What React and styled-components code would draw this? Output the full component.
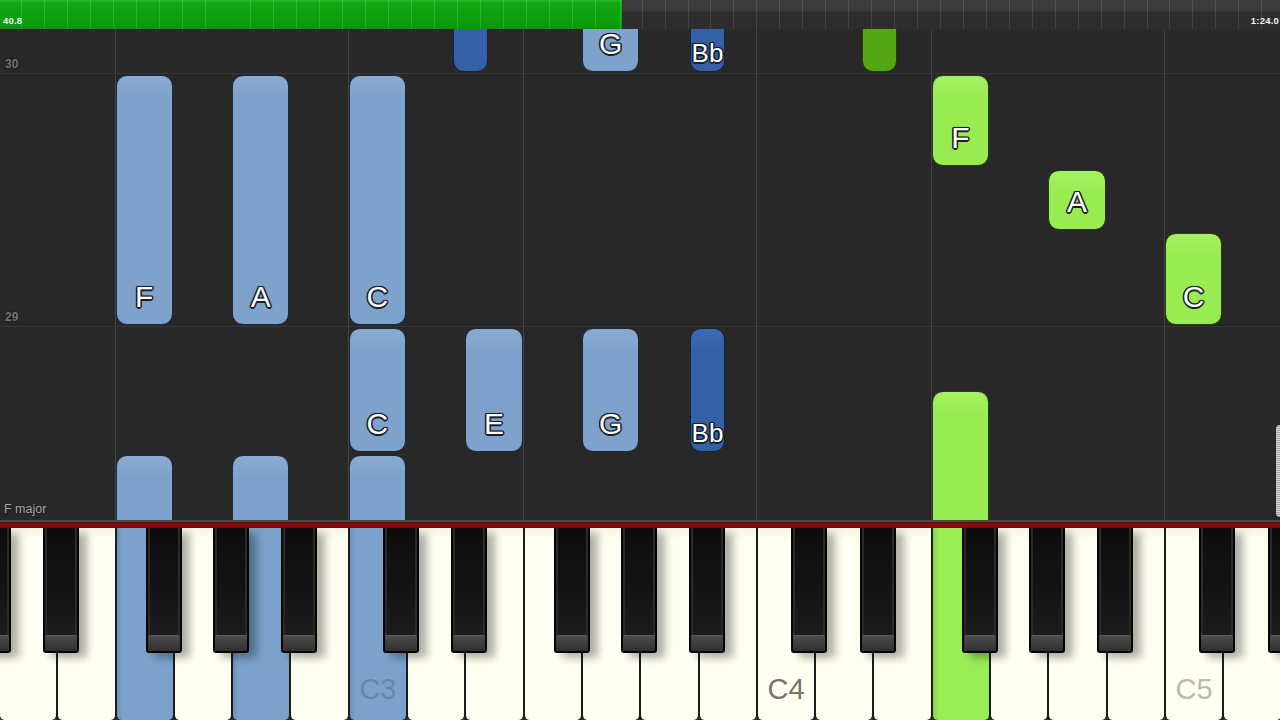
import React from "react";
import styled, { createGlobalStyle } from "styled-components";

const W = 58.3;
const X0 = -1;
const NAMES = ["D", "E", "F", "G", "A", "B", "C"];
const BLACK_OFFSET = { C: -24, D: -14, F: -28, G: -19, A: -10 };

const keyX = (i) => X0 + i * W;

const WHITE_KEYS = Array.from({ length: 22 }, (_, i) => ({
  name: NAMES[i % 7],
  octave: 2 + Math.floor((i + 1) / 7),
}));

const BLACK_KEYS = [
  { left: X0 + BLACK_OFFSET.C },
  ...WHITE_KEYS.map((k, i) =>
    BLACK_OFFSET[k.name] !== undefined
      ? { left: keyX(i + 1) + BLACK_OFFSET[k.name] }
      : null
  ).filter(Boolean),
];

const LIT = { 2: "blue", 4: "blue", 6: "blue", 16: "green" };
const KEY_LABELS = {
  6: { text: "C3", color: "#6a87aa" },
  13: { text: "C4", color: "#76766e" },
  20: { text: "C5", color: "#b9b9b1" },
};

const GRID_X = [1, 5, 8, 12, 15, 19].map((i) => keyX(i + 1));
const GRID_Y = [
  { y: 44, label: "30" },
  { y: 297, label: "29" },
];

// white-key notes: key index, top, height (relative to roll), label
const NOTES = [
  { key: 2, top: 46, h: 250, label: "F", tone: "blue" },
  { key: 2, top: 426, h: 120, tone: "blue" },
  { key: 4, top: 46, h: 250, label: "A", tone: "blue" },
  { key: 4, top: 426, h: 120, tone: "blue" },
  { key: 6, top: 46, h: 250, label: "C", tone: "blue" },
  { key: 6, top: 299, h: 124, label: "C", tone: "blue" },
  { key: 6, top: 426, h: 120, tone: "blue" },
  { key: 8, top: 299, h: 124, label: "E", tone: "blue" },
  { key: 10, top: 299, h: 124, label: "G", tone: "blue" },
  { key: 10, top: -20, h: 63, label: "G", tone: "blue" },
  { key: 16, top: 46, h: 91, label: "F", tone: "green" },
  { key: 16, top: 362, h: 180, tone: "green" },
  { key: 18, top: 141, h: 60, label: "A", tone: "green" },
  { key: 20, top: 204, h: 92, label: "C", tone: "green" },
];

const SHARP_NOTES = [
  { left: 690, top: 299, h: 124, label: "Bb", tone: "blue" },
  { left: 690, top: -20, h: 63, label: "Bb", tone: "blue" },
  { left: 453, top: -20, h: 63, tone: "blue" },
  { left: 862, top: -20, h: 63, tone: "green" },
];

const TONES = {
  blue: { fill: "#7fa2cc", top: "#8aabd3", edge: "#1d2a3c" },
  green: { fill: "#98ec52", top: "#a4f262", edge: "#2a3a1a" },
};
const SHARP_TONES = {
  blue: { fill: "#3461a6", top: "#3d6bb2", edge: "#142544" },
  green: { fill: "#55a614", top: "#66bb1c", edge: "#22400a" },
};

const GlobalStyle = createGlobalStyle`
  html, body {
    margin: 0;
    padding: 0;
    background: #282828;
    overflow: hidden;
  }
  body {
    font-family: "Liberation Sans", Arial, sans-serif;
  }
`;

const Screen = styled.div`
  width: 1280px;
  height: 720px;
  display: flex;
  flex-direction: column;
  overflow: hidden;
  background: #282828;
`;

const TopBar = styled.div`
  height: 29px;
  display: flex;
  flex: 0 0 auto;
`;

const Played = styled.div`
  width: 622px;
  display: flex;
  align-items: flex-end;
  padding: 0 0 3px 3px;
  box-sizing: border-box;
  background-image: repeating-linear-gradient(
      to right,
      transparent 0,
      transparent 21px,
      rgba(255, 255, 255, 0.14) 21px,
      rgba(255, 255, 255, 0.14) 22px,
      transparent 22px,
      transparent 22.95px
    ),
    linear-gradient(#2cb82c 0, #12a612 3px, #0c9e0c 22px, #0a930a 29px);
  background-position: -23px 0, 0 0;
`;

const Remaining = styled.div`
  flex: 1;
  display: flex;
  align-items: flex-end;
  justify-content: flex-end;
  padding: 0 1px 3px 0;
  box-sizing: border-box;
  overflow: hidden;
  background-image: repeating-linear-gradient(
      to right,
      transparent 0,
      transparent 19.6px,
      rgba(255, 255, 255, 0.1) 19.6px,
      rgba(255, 255, 255, 0.1) 20.6px,
      transparent 20.6px,
      transparent 22.95px
    ),
    linear-gradient(#3d3d3d 0, #3a3a3a 11px, #2f2f2f 12px, #2c2c2c 29px);
`;

const TimeText = styled.span`
  font-size: 9.5px;
  font-weight: bold;
  color: #f4f4f4;
  letter-spacing: 0.2px;
  white-space: nowrap;
`;

const Roll = styled.div`
  position: relative;
  height: 491px;
  flex: 0 0 auto;
  overflow: hidden;
  background: #282828;
`;

const VLine = styled.div`
  position: absolute;
  top: 0;
  bottom: 0;
  width: 1px;
  background: #424242;
`;

const HLine = styled.div`
  position: absolute;
  left: 0;
  right: 0;
  height: 1px;
  background: #373737;
`;

const MeasureLabel = styled.span`
  position: absolute;
  left: 5px;
  font-size: 12px;
  font-weight: bold;
  color: #727272;
  text-shadow: 0 0 2px #111;
`;

const KeyName = styled.span`
  position: absolute;
  left: 4px;
  bottom: 4px;
  font-size: 12.5px;
  color: #a8a8a8;
  text-shadow: 0 0 2px #111;
`;

const outline = (c) => `
  1.5px 0 0 ${c}, -1.5px 0 0 ${c}, 0 1.5px 0 ${c}, 0 -1.5px 0 ${c},
  1px 1px 0 ${c}, -1px -1px 0 ${c}, 1px -1px 0 ${c}, -1px 1px 0 ${c},
  0 0 2px ${c}
`;

const Note = styled.div`
  position: absolute;
  box-sizing: border-box;
  display: flex;
  flex-direction: column;
  justify-content: flex-end;
  align-items: center;
  border-radius: 11px;
  border: 1.5px solid ${(p) => p.$tone.edge};
  background: linear-gradient(${(p) => p.$tone.top}, ${(p) => p.$tone.fill} 22px);
  padding-bottom: ${(p) => (p.$sharp ? "5px" : "12px")};
`;

const NoteLabel = styled.span`
  font-size: ${(p) => (p.$sharp ? "26px" : "30px")};
  line-height: 1;
  color: #ffffff;
  text-shadow: ${outline("#1a1e26")};
`;

const ScrollNub = styled.div`
  position: absolute;
  right: 0;
  top: 396px;
  width: 4px;
  height: 92px;
  border-radius: 4px 0 0 4px;
  background: repeating-linear-gradient(#d8d8d8 0, #d8d8d8 1px, #a0a0a0 1px, #a0a0a0 2px);
`;

const KeyboardRim = styled.div`
  flex: 0 0 auto;
  height: 8px;
  background: linear-gradient(#4a4a4a 0, #4a4a4a 2px, #6a0808 2px, #8e0d0d 5px, #7a0a0a 8px);
`;

const Keyboard = styled.div`
  position: relative;
  height: 192px;
  display: flex;
  margin-left: ${X0}px;
  flex: 0 0 auto;
`;

const WhiteKey = styled.div`
  flex: 0 0 ${W}px;
  height: 192px;
  box-sizing: border-box;
  position: relative;
  border-left: 1px solid #1c1c1c;
  border-right: 1px solid #1c1c1c;
  border-radius: 0 0 5px 5px;
  background: ${(p) =>
    p.$lit === "blue"
      ? "linear-gradient(to right, #6d90b9 0, #7ca2cc 6px)"
      : p.$lit === "green"
      ? "linear-gradient(to right, #86d448 0, #99ee55 6px)"
      : "linear-gradient(#f6f6e6, #fffff2 12px)"};
`;

const KeyLabel = styled.span`
  position: absolute;
  left: 0;
  right: 0;
  bottom: 16px;
  text-align: center;
  font-size: 29px;
  line-height: 1;
  color: ${(p) => p.$color};
`;

const BlackKey = styled.div`
  position: absolute;
  top: 0;
  width: 36px;
  height: 125px;
  box-sizing: border-box;
  border: 2px solid #050505;
  border-top: none;
  border-radius: 0 0 3px 3px;
  display: flex;
  flex-direction: column;
  justify-content: flex-end;
  background: linear-gradient(#0c0c0c 0, #161616 60%, #1e1e1e 100%);
  box-shadow: inset 2px 0 0 #2a2a2a, inset -2px 0 0 #2a2a2a,
    8px 5px 8px rgba(0, 0, 0, 0.32);
`;

const BlackLip = styled.div`
  height: 15px;
  border-top: 1px solid #5e5e5e;
  border-radius: 2px 2px 0 0;
  background: linear-gradient(#4c4c4c, #303030);
`;

const App = () => {
  return (
    <>
      <GlobalStyle />
      <Screen>
        <TopBar>
          <Played>
            <TimeText>40.8</TimeText>
          </Played>
          <Remaining>
            <TimeText>1:24.0</TimeText>
          </Remaining>
        </TopBar>

        <Roll>
          {GRID_X.map((x) => (
            <VLine key={x} style={{ left: Math.round(x) - 1 }} />
          ))}
          {GRID_Y.map((g) => (
            <React.Fragment key={g.label}>
              <HLine style={{ top: g.y }} />
              <MeasureLabel style={{ top: g.y - 16 }}>{g.label}</MeasureLabel>
            </React.Fragment>
          ))}
          <KeyName>F major</KeyName>

          {NOTES.map((n, idx) => (
            <Note
              key={idx}
              $tone={TONES[n.tone]}
              style={{
                left: keyX(n.key),
                width: W - 1,
                top: n.top,
                height: n.h,
              }}
            >
              {n.label && <NoteLabel>{n.label}</NoteLabel>}
            </Note>
          ))}
          {SHARP_NOTES.map((n, idx) => (
            <Note
              key={"s" + idx}
              $sharp
              $tone={SHARP_TONES[n.tone]}
              style={{ left: n.left, width: 35, top: n.top, height: n.h }}
            >
              {n.label && <NoteLabel $sharp>{n.label}</NoteLabel>}
            </Note>
          ))}
          <ScrollNub />
        </Roll>

        <KeyboardRim />
        <Keyboard>
          {WHITE_KEYS.map((k, i) => (
            <WhiteKey key={i} $lit={LIT[i]}>
              {KEY_LABELS[i] && (
                <KeyLabel $color={KEY_LABELS[i].color}>
                  {KEY_LABELS[i].text}
                </KeyLabel>
              )}
            </WhiteKey>
          ))}
          {BLACK_KEYS.map((b, i) => (
            <BlackKey key={"b" + i} style={{ left: b.left - X0 }}>
              <BlackLip />
            </BlackKey>
          ))}
        </Keyboard>
      </Screen>
    </>
  );
};

export default App;
